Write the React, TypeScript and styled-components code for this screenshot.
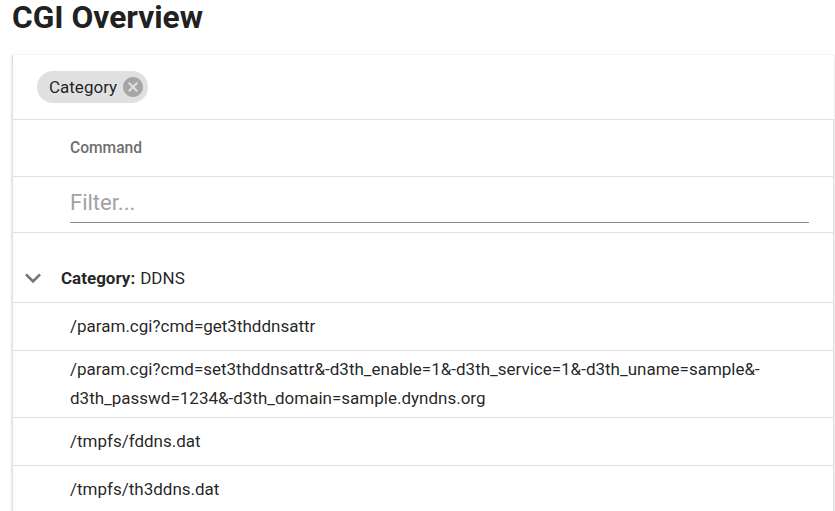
import React from "react";
import styled, { createGlobalStyle } from "styled-components";

const GlobalStyle = createGlobalStyle`
  html, body {
    margin: 0;
    padding: 0;
    background: #ffffff;
    font-family: Roboto, "Noto Sans", Arial, sans-serif;
    color: rgba(0, 0, 0, 0.87);
    overflow: hidden;
  }
`;

const Page = styled.div`
  padding: 0 1px 0 12px;
`;

const Title = styled.h1`
  margin: 0 0 20px 0;
  font-size: 31.7px;
  line-height: 35px;
  font-weight: 700;
  color: #212121;
`;

const Paper = styled.div`
  background: #fff;
  box-shadow: 0 1px 3px rgba(0, 0, 0, 0.12), 0 0 1px rgba(0, 0, 0, 0.14);
  border-left: 1px solid #e0e0e0;
`;

const Toolbar = styled.div`
  height: 64px;
  display: flex;
  align-items: center;
  padding: 0 24px;
  border-bottom: 1px solid #e0e0e0;
`;

const Chip = styled.div`
  height: 32px;
  border-radius: 16px;
  background: #e0e0e0;
  display: inline-flex;
  align-items: center;
  padding-left: 12px;
  font-size: 17px;
  color: rgba(0, 0, 0, 0.87);
`;

const ChipLabel = styled.span`
  margin-right: 4px;
`;

const DeleteIcon = styled.svg`
  width: 24px;
  height: 24px;
  margin-right: 3px;
  fill: rgba(0, 0, 0, 0.26);
`;

const Row = styled.div<{ $height?: number }>`
  display: flex;
  align-items: center;
  min-height: ${(p) => p.$height ?? 48}px;
  box-sizing: border-box;
  padding: 4px 16px 4px 57px;
  border-bottom: 1px solid #e0e0e0;
  border-right: 1px solid #e0e0e0;
`;

const HeaderLabel = styled.span`
  font-size: 15.6px;
  font-weight: 500;
  color: #6f6f6f;
`;

const FilterInput = styled.input`
  flex: 1;
  margin-right: 8px;
  border: none;
  border-bottom: 1px solid #8c8c8c;
  outline: none;
  padding: 4px 0 7px 0;
  font-family: inherit;
  font-size: 22px;
  color: rgba(0, 0, 0, 0.87);
  background: transparent;
  &::placeholder {
    color: #a2a2a2;
    opacity: 1;
  }
`;

const GroupRow = styled.div`
  display: flex;
  align-items: center;
  height: 70px;
  box-sizing: border-box;
  padding: 20px 16px 0 4px;
  border-bottom: 1px solid #e0e0e0;
  border-right: 1px solid #e0e0e0;
  font-size: 17px;
`;

const Chevron = styled.svg`
  width: 32px;
  height: 32px;
  fill: #757575;
  margin-right: 12px;
`;

const GroupKey = styled.span`
  font-weight: 700;
  margin-right: 5px;
`;

const CellText = styled.span`
  font-size: 17px;
  line-height: 29px;
  color: rgba(0, 0, 0, 0.87);
  overflow-wrap: normal;
`;

const commands = [
  "/param.cgi?cmd=get3thddnsattr",
  "/param.cgi?cmd=set3thddnsattr&-d3th_enable=1&-d3th_service=1&-d3th_uname=sample&-d3th_passwd=1234&-d3th_domain=sample.dyndns.org",
  "/tmpfs/fddns.dat",
  "/tmpfs/th3ddns.dat",
];

export default function App() {
  return (
    <Page>
      <GlobalStyle />
      <Title>CGI Overview</Title>
      <Paper>
        <Toolbar>
          <Chip>
            <ChipLabel>Category</ChipLabel>
            <DeleteIcon viewBox="0 0 24 24">
              <path d="M12 2C6.47 2 2 6.47 2 12s4.47 10 10 10 10-4.47 10-10S17.53 2 12 2zm5 13.59L15.59 17 12 13.41 8.41 17 7 15.59 10.59 12 7 8.41 8.41 7 12 10.59 15.59 7 17 8.41 13.41 12 17 15.59z" />
            </DeleteIcon>
          </Chip>
        </Toolbar>
        <Row $height={57}>
          <HeaderLabel>Command</HeaderLabel>
        </Row>
        <Row $height={56}>
          <FilterInput placeholder="Filter..." />
        </Row>
        <GroupRow>
          <Chevron viewBox="0 0 24 24">
            <path d="M16.59 8.59L12 13.17 7.41 8.59 6 10l6 6 6-6z" />
          </Chevron>
          <GroupKey>Category:</GroupKey>
          <span>DDNS</span>
        </GroupRow>
        {commands.map((c) => (
          <Row key={c}>
            <CellText>{c}</CellText>
          </Row>
        ))}
      </Paper>
    </Page>
  );
}
